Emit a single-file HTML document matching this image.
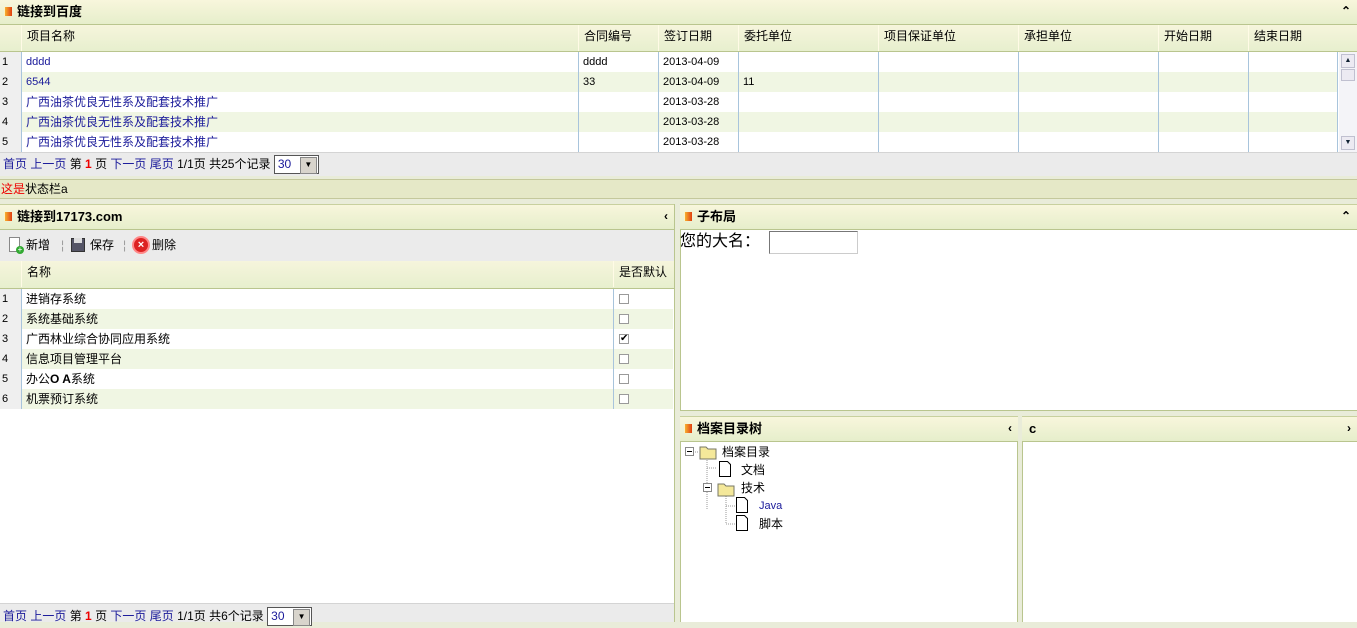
<!DOCTYPE html>
<html><head><meta charset="utf-8">
<style>
*{box-sizing:border-box;margin:0;padding:0}
body{width:1357px;height:622px;position:relative;overflow:hidden;background:#e9ecd9;font-family:"Liberation Sans","Noto Sans CJK SC",sans-serif;font-size:12px;color:#000}
.a{position:absolute}
.hd{position:absolute;background:linear-gradient(#f8f6dc,#e6eecb);border-bottom:1px solid #b9c58e;border-top:1px solid #c8d09e;font-weight:bold;font-size:13px;line-height:23px;padding-left:17px}
.hd:before{content:"";position:absolute;left:4px;top:7px;width:7px;height:9px;background:linear-gradient(90deg,#f7b030,#e04010);border-left:1px solid #fff3c0}
.hd.ni:before{display:none}
.arr{position:absolute;right:6px;top:0;font-weight:bold;font-size:12px}
.gh{position:absolute;background:linear-gradient(#f6f5dc,#e7efce);border-bottom:1px solid #b9c58e;height:27px}
.gh div{position:absolute;top:0;height:26px;line-height:22px;padding-left:5px;border-left:1px solid #fffbe6;font-size:12px}
.row{position:absolute;height:20px;line-height:20px}
.row.o{background:#fff}.row.e{background:#f0f6e3}
.row div{position:absolute;top:0;height:20px;padding-left:4px;font-size:11px}
.bl{border-left:1px solid #a8c4dc}
.blue{color:#1a1a9a}
.pg{position:absolute;background:#ebebeb;border-top:1px solid #d4d4d4;line-height:22px;padding-left:3px;font-size:12px}
.pg a{color:#1a1a9a}
.pg b{color:#e00}
.sel{display:inline-block;vertical-align:middle;width:45px;height:19px;border:1px solid #555;background:#fff;position:relative;line-height:16px;padding-left:3px;color:#1a1a9a}
.sel:after{content:"▼";position:absolute;right:1px;top:1px;width:15px;height:15px;background:#d8d4cc;border:1px solid #888;font-size:8px;line-height:14px;text-align:center;color:#000}
.cb{position:absolute;left:5px;top:5px;width:10px;height:10px;border:1px solid #9a9a9a;background:#fff;font-size:10px;line-height:8px;text-align:center}
</style></head><body>

<div class="a" style="left:0;top:0;width:1357px;height:176px;background:#fff"></div>
<div class="hd" style="left:0;top:0;width:1357px;height:25px;border-top:none">链接到百度<span class="arr">⌃</span></div>
<div class="gh" style="left:0;top:25px;width:1357px">
<div style="left:0;width:21px;border:none"></div>
<div style="left:21px;width:557px">项目名称</div>
<div style="left:578px;width:80px">合同编号</div>
<div style="left:658px;width:80px">签订日期</div>
<div style="left:738px;width:140px">委托单位</div>
<div style="left:878px;width:140px">项目保证单位</div>
<div style="left:1018px;width:140px">承担单位</div>
<div style="left:1158px;width:90px">开始日期</div>
<div style="left:1248px;width:90px">结束日期</div>
</div>
<div class="a" style="left:0;top:52px;width:21px;height:100px;background:#efefef"></div>
<div class="row o" style="left:21px;top:52px;width:1317px"><div class="bl blue" style="left:0;width:557px">dddd</div><div class="bl" style="left:557px;width:80px">dddd</div><div class="bl" style="left:637px;width:80px">2013-04-09</div><div class="bl" style="left:717px;width:140px"></div><div class="bl" style="left:857px;width:140px"></div><div class="bl" style="left:997px;width:140px"></div><div class="bl" style="left:1137px;width:90px"></div><div class="bl" style="left:1227px;width:90px;border-right:1px solid #a8c4dc"></div></div>
<div class="row e" style="left:21px;top:72px;width:1317px"><div class="bl blue" style="left:0;width:557px">6544</div><div class="bl" style="left:557px;width:80px">33</div><div class="bl" style="left:637px;width:80px">2013-04-09</div><div class="bl" style="left:717px;width:140px">11</div><div class="bl" style="left:857px;width:140px"></div><div class="bl" style="left:997px;width:140px"></div><div class="bl" style="left:1137px;width:90px"></div><div class="bl" style="left:1227px;width:90px;border-right:1px solid #a8c4dc"></div></div>
<div class="row o" style="left:21px;top:92px;width:1317px"><div class="bl blue" style="left:0;width:557px;font-size:12px">广西油茶优良无性系及配套技术推广</div><div class="bl" style="left:557px;width:80px"></div><div class="bl" style="left:637px;width:80px">2013-03-28</div><div class="bl" style="left:717px;width:140px"></div><div class="bl" style="left:857px;width:140px"></div><div class="bl" style="left:997px;width:140px"></div><div class="bl" style="left:1137px;width:90px"></div><div class="bl" style="left:1227px;width:90px;border-right:1px solid #a8c4dc"></div></div>
<div class="row e" style="left:21px;top:112px;width:1317px"><div class="bl blue" style="left:0;width:557px;font-size:12px">广西油茶优良无性系及配套技术推广</div><div class="bl" style="left:557px;width:80px"></div><div class="bl" style="left:637px;width:80px">2013-03-28</div><div class="bl" style="left:717px;width:140px"></div><div class="bl" style="left:857px;width:140px"></div><div class="bl" style="left:997px;width:140px"></div><div class="bl" style="left:1137px;width:90px"></div><div class="bl" style="left:1227px;width:90px;border-right:1px solid #a8c4dc"></div></div>
<div class="row o" style="left:21px;top:132px;width:1317px"><div class="bl blue" style="left:0;width:557px;font-size:12px">广西油茶优良无性系及配套技术推广</div><div class="bl" style="left:557px;width:80px"></div><div class="bl" style="left:637px;width:80px">2013-03-28</div><div class="bl" style="left:717px;width:140px"></div><div class="bl" style="left:857px;width:140px"></div><div class="bl" style="left:997px;width:140px"></div><div class="bl" style="left:1137px;width:90px"></div><div class="bl" style="left:1227px;width:90px;border-right:1px solid #a8c4dc"></div></div>
<div style="position:absolute;left:0;top:52px;font-size:11px;line-height:20px;padding-left:2px">1<br>2<br>3<br>4<br>5</div>
<div class="a" style="left:1339px;top:52px;width:18px;height:100px;background:#f4f4f8"></div>
<div class="a" style="left:1341px;top:54px;width:14px;height:14px;background:#eceaf2;border:1px solid #c0c0d0;font-size:7px;text-align:center;line-height:12px;color:#123">▲</div>
<div class="a" style="left:1341px;top:69px;width:14px;height:12px;background:#eceaf2;border:1px solid #c0c0d0"></div>
<div class="a" style="left:1341px;top:136px;width:14px;height:14px;background:#eceaf2;border:1px solid #c0c0d0;font-size:7px;text-align:center;line-height:12px;color:#123">▼</div>
<div class="pg" style="left:0;top:152px;width:1357px;height:24px"><a>首页</a> <a>上一页</a> 第 <b>1</b> 页 <a>下一页</a> <a>尾页</a> 1/1页 共25个记录 <span class="sel">30</span></div>

<div class="a" style="left:0;top:179px;width:1357px;height:20px;background:#e5e8c7;border-top:1px solid #c4c89c;border-bottom:1px solid #c4c89c;line-height:18px;padding-left:1px"><span style="color:#e00">这是</span>状态栏a</div>

<div class="a" style="left:0;top:204px;width:675px;height:418px;background:#fff;border-right:1px solid #b9c58e"></div>
<div class="hd" style="left:0;top:204px;width:674px;height:26px">链接到17173.com<span class="arr">‹</span></div>
<div class="a" style="left:0;top:230px;width:674px;height:31px;background:#ebebeb;line-height:30px;font-size:12px">
<span class="a" style="left:9px;top:7px;width:11px;height:15px;background:#fff;border:1px solid #888"></span><span class="a" style="left:16px;top:16px;width:8px;height:8px;border-radius:50%;background:#3a3;color:#fff;font-size:8px;line-height:8px;text-align:center">+</span>
<span class="a" style="left:26px">新增</span><span class="a" style="left:61px;color:#999">¦</span>
<span class="a" style="left:71px;top:8px;width:14px;height:14px;background:#556;border:1px solid #333"></span><span class="a" style="left:74px;top:8px;width:8px;height:5px;background:#ddd"></span>
<span class="a" style="left:90px">保存</span><span class="a" style="left:123px;color:#999">¦</span>
<span class="a" style="left:132px;top:6px;width:18px;height:18px;border-radius:50%;background:#d22;border:2px solid #f88;color:#fff;font-weight:bold;font-size:11px;line-height:14px;text-align:center">×</span>
<span class="a" style="left:152px">删除</span>
</div>
<div class="gh" style="left:0;top:261px;width:674px;height:28px">
<div style="left:0;width:21px;border:none"></div>
<div style="left:21px;width:592px">名称</div>
<div style="left:613px;width:60px">是否默认</div>
</div>
<div class="a" style="left:0;top:289px;width:21px;height:120px;background:#efefef"></div>
<div class="row o" style="left:21px;top:289px;width:652px"><div class="bl" style="left:0;width:592px;font-size:12px">进销存系统</div><div class="bl" style="left:592px;width:60px"><span class="cb"></span></div></div>
<div class="row e" style="left:21px;top:309px;width:652px"><div class="bl" style="left:0;width:592px;font-size:12px">系统基础系统</div><div class="bl" style="left:592px;width:60px"><span class="cb"></span></div></div>
<div class="row o" style="left:21px;top:329px;width:652px"><div class="bl" style="left:0;width:592px;font-size:12px">广西林业综合协同应用系统</div><div class="bl" style="left:592px;width:60px"><span class="cb">✔</span></div></div>
<div class="row e" style="left:21px;top:349px;width:652px"><div class="bl" style="left:0;width:592px;font-size:12px">信息项目管理平台</div><div class="bl" style="left:592px;width:60px"><span class="cb"></span></div></div>
<div class="row o" style="left:21px;top:369px;width:652px"><div class="bl" style="left:0;width:592px;font-size:12px">办公<b>O A</b>系统</div><div class="bl" style="left:592px;width:60px"><span class="cb"></span></div></div>
<div class="row e" style="left:21px;top:389px;width:652px"><div class="bl" style="left:0;width:592px;font-size:12px">机票预订系统</div><div class="bl" style="left:592px;width:60px"><span class="cb"></span></div></div>
<div style="position:absolute;left:0;top:289px;font-size:11px;line-height:20px;padding-left:2px">1<br>2<br>3<br>4<br>5<br>6</div>
<div class="pg" style="left:0;top:603px;width:674px;height:19px;line-height:24px"><a>首页</a> <a>上一页</a> 第 <b>1</b> 页 <a>下一页</a> <a>尾页</a> 1/1页 共6个记录 <span class="sel">30</span></div>

<div class="a" style="left:680px;top:204px;width:677px;height:207px;background:#fff;border-left:1px solid #b9c58e;border-bottom:1px solid #b9c58e"></div>
<div class="hd" style="left:680px;top:204px;width:677px;height:26px">子布局<span class="arr">⌃</span></div>
<div class="a" style="left:680px;top:231px;font-size:16px;line-height:22px">您的大名：</div>
<div class="a" style="left:769px;top:231px;width:89px;height:23px;border:1px solid #777;border-right-color:#ccc;border-bottom-color:#ccc;background:#fff"></div>

<div class="a" style="left:680px;top:416px;width:338px;height:206px;background:#fff;border-left:1px solid #b9c58e;border-right:1px solid #b9c58e"></div>
<div class="hd" style="left:680px;top:416px;width:338px;height:26px">档案目录树<span class="arr">‹</span></div>
<svg class="a" style="left:680px;top:442px" width="120" height="94">
<g fill="none" stroke="#999" stroke-dasharray="1,1"><path d="M13 10h6M27 18v50M27 26h10M27 45h6M46 54v28M46 64h10M46 82h10"/></g>
<rect x="5.5" y="5.5" width="8" height="8" fill="#fff" stroke="#888"/><path d="M7 9.5h5" stroke="#000"/>
<rect x="23.5" y="41.5" width="8" height="8" fill="#fff" stroke="#888"/><path d="M25 45.5h5" stroke="#000"/>
<path d="M20 5h6l2 2h8v10H20z" fill="#f4e89a" stroke="#776"/><path d="M38 42h6l2 2h8v10H38z" fill="#f4e89a" stroke="#776"/>
<path d="M39.5 19.5h8l3 3v12h-11z M56.5 55.5h8l3 3v12h-11z M56.5 73.5h8l3 3v12h-11z" fill="#fff" stroke="#000"/>
</svg>
<div class="a" style="left:722px;top:443px;line-height:18px">档案目录</div>
<div class="a" style="left:741px;top:461px;line-height:18px">文档</div>
<div class="a" style="left:741px;top:479px;line-height:18px">技术</div>
<div class="a" style="left:759px;top:497px;line-height:18px;color:#1a1a9a;font-size:11px">Java</div>
<div class="a" style="left:759px;top:515px;line-height:18px">脚本</div>

<div class="a" style="left:1022px;top:416px;width:335px;height:206px;background:#fff;border-left:1px solid #b9c58e"></div>
<div class="hd ni" style="left:1022px;top:416px;width:335px;height:26px;padding-left:7px">c<span class="arr">›</span></div>
</body></html>
